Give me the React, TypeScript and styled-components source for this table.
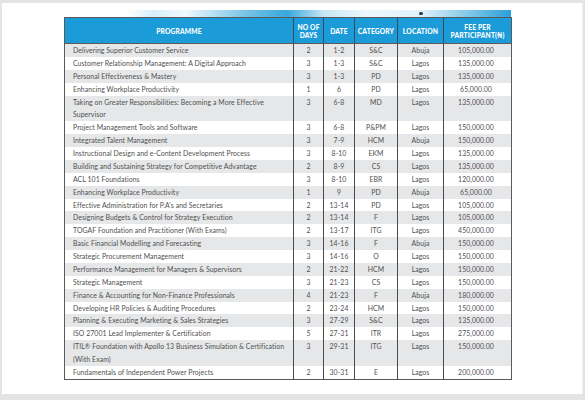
import React from "react";
import styled, { createGlobalStyle } from "styled-components";

const Global = createGlobalStyle`
  html, body { margin: 0; padding: 0; background: #e4e4e4; }
  body { width: 585px; height: 400px; overflow: hidden; font-family: Lato, "Open Sans", sans-serif; }
  #root { width: 585px; height: 400px; }
`;

const Frame = styled.div`
  position: relative;
  margin: 3px 2px 0 2px;
  height: 391px;
  background: #ffffff;
  padding: 7px 0 0 62px;
  box-sizing: border-box;
  border-right: 1px solid #efefef;
`;

const Banner = styled.div`
  width: 447px;
  height: 7px;
  position: relative;
  background: linear-gradient(
    90deg,
    rgba(255,255,255,1) 0%,
    rgba(255,255,255,1) 14%,
    #d8eef8 20%,
    #f1f9fc 27%,
    #7cc6e8 40%,
    #3aa7dd 50%,
    #c6e6f4 58%,
    #eef8fc 68%,
    #e1f2f9 80%,
    #6bbde4 93%,
    #2a9fd9 100%
  );
`;

const Dot = styled.span`
  position: absolute;
  left: 355px;
  top: 2px;
  width: 4px;
  height: 3px;
  border-radius: 2px;
  background: #2b3b48;
`;

const Table = styled.table`
  border-collapse: collapse;
  table-layout: fixed;
  width: 447px;
  border: 1px solid #5a5a5a;
`;

const Th = styled.th`
  background: #1b9bd8;
  color: #ffffff;
  font-family: Lato, sans-serif;
  font-weight: 900;
  font-size: 6.7px;
  line-height: 8px;
  letter-spacing: 0.15px;
  height: 25px;
  padding: 0;
  text-align: center;
  border-left: 1px solid #3a4a55;
  border-bottom: 1px solid #5a5a5a;
  text-transform: uppercase;
  &:first-child { border-left: none; }
`;

const Tr = styled.tr<{ $shade: boolean }>`
  background: ${(p) => (p.$shade ? "#e6e7e8" : "#ffffff")};
`;

const Td = styled.td<{ $left?: boolean }>`
  font-family: Lato, sans-serif;
  font-size: 6.9px;
  letter-spacing: 0.07px;
  color: #505050;
  line-height: 12.88px;
  padding: 0 ${(p) => (p.$left ? "0 0 8px" : "0")};
  text-align: ${(p) => (p.$left ? "left" : "center")};
  vertical-align: top;
  border-left: 1px solid #4a4a4a;
  &:first-child { border-left: none; }
`;

const FeeTd = styled(Td)`
  padding-right: 3px;
`;

type Row = [string, string, string, string, string, string];

const rows: Row[] = [
  ["Delivering Superior Customer Service", "2", "1-2", "S&C", "Abuja", "105,000.00"],
  ["Customer Relationship Management: A Digital Approach", "3", "1-3", "S&C", "Lagos", "135,000.00"],
  ["Personal Effectiveness & Mastery", "3", "1-3", "PD", "Lagos", "135,000.00"],
  ["Enhancing Workplace Productivity", "1", "6", "PD", "Lagos", "65,000.00"],
  ["Taking on Greater Responsibilities: Becoming a More Effective Supervisor", "3", "6-8", "MD", "Lagos", "135,000.00"],
  ["Project Management Tools and Software", "3", "6-8", "P&PM", "Lagos", "150,000.00"],
  ["Integrated Talent Management", "3", "7-9", "HCM", "Abuja", "150,000.00"],
  ["Instructional Design and e-Content Development Process", "3", "8-10", "EKM", "Lagos", "135,000.00"],
  ["Building and Sustaining Strategy for Competitive Advantage", "2", "8-9", "CS", "Lagos", "135,000.00"],
  ["ACL 101 Foundations", "3", "8-10", "EBR", "Lagos", "120,000.00"],
  ["Enhancing Workplace Productivity", "1", "9", "PD", "Abuja", "65,000.00"],
  ["Effective Administration for P.A's and Secretaries", "2", "13-14", "PD", "Lagos", "105,000.00"],
  ["Designing Budgets & Control for Strategy Execution", "2", "13-14", "F", "Lagos", "105,000.00"],
  ["TOGAF Foundation and Practitioner (With Exams)", "2", "13-17", "ITG", "Lagos", "450,000.00"],
  ["Basic Financial Modelling and Forecasting", "3", "14-16", "F", "Abuja", "150,000.00"],
  ["Strategic Procurement Management", "3", "14-16", "O", "Lagos", "150,000.00"],
  ["Performance Management for Managers & Supervisors", "2", "21-22", "HCM", "Lagos", "150,000.00"],
  ["Strategic Management", "3", "21-23", "CS", "Lagos", "150,000.00"],
  ["Finance & Accounting for Non-Finance Professionals", "4", "21-23", "F", "Abuja", "180,000.00"],
  ["Developing HR Policies & Auditing Procedures", "2", "23-24", "HCM", "Lagos", "150,000.00"],
  ["Planning & Executing Marketing & Sales Strategies", "3", "27-29", "S&C", "Lagos", "135,000.00"],
  ["ISO 27001 Lead Implementer & Certification", "5", "27-31", "ITR", "Lagos", "275,000.00"],
  ["ITIL® Foundation with Apollo 13 Business Simulation & Certification (With Exam)", "3", "29-31", "ITG", "Lagos", "150,000.00"],
  ["Fundamentals of Independent Power Projects", "2", "30-31", "E", "Lagos", "200,000.00"],
];

export default function App() {
  return (
    <>
      <Global />
      <Frame>
        <Banner>
          <Dot />
        </Banner>
        <Table>
          <colgroup>
            <col style={{ width: 229 }} />
            <col style={{ width: 30 }} />
            <col style={{ width: 31 }} />
            <col style={{ width: 43 }} />
            <col style={{ width: 46 }} />
            <col style={{ width: 68 }} />
          </colgroup>
          <thead>
            <tr>
              <Th>Programme</Th>
              <Th>No of<br />Days</Th>
              <Th>Date</Th>
              <Th>Category</Th>
              <Th>Location</Th>
              <Th>Fee per<br />Participant(₦)</Th>
            </tr>
          </thead>
          <tbody>
            {rows.map((r, i) => (
              <Tr key={i} $shade={i % 2 === 0}>
                <Td $left>{r[0]}</Td>
                <Td>{r[1]}</Td>
                <Td>{r[2]}</Td>
                <Td>{r[3]}</Td>
                <Td>{r[4]}</Td>
                <FeeTd>{r[5]}</FeeTd>
              </Tr>
            ))}
          </tbody>
        </Table>
      </Frame>
    </>
  );
}
